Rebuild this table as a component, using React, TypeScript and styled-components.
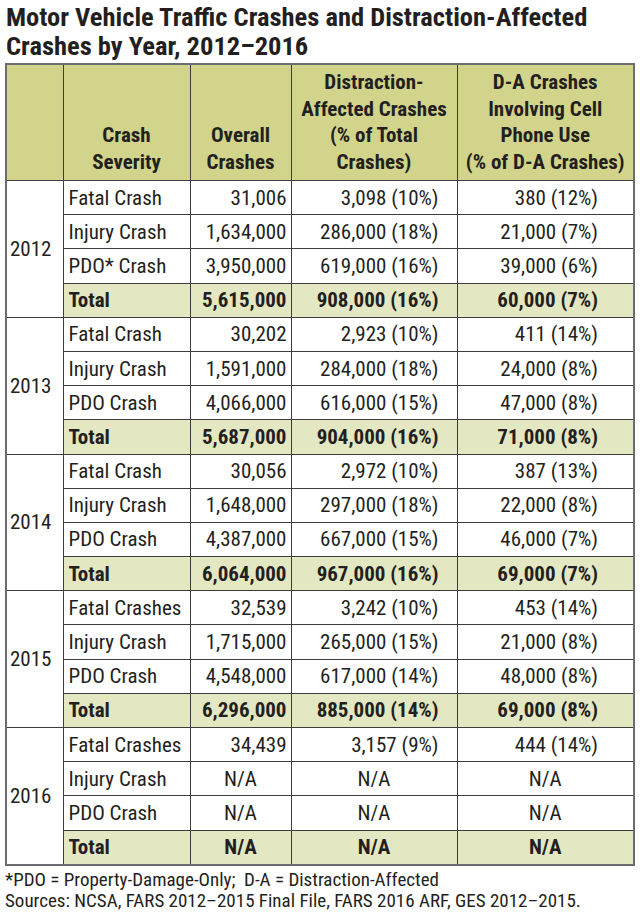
import React from "react"
import styled, { createGlobalStyle } from "styled-components"

const GlobalStyle = createGlobalStyle`
  html, body {
    margin: 0;
    padding: 0;
    background: #ffffff;
  }
  body {
    font-family: "Roboto Condensed", Roboto, "Liberation Sans", sans-serif;
    font-stretch: condensed;
    color: #231f20;
  }
`

const Page = styled.div`
  width: 640px;
  padding: 2px 0 0 5px;
  box-sizing: border-box;
`

const Title = styled.h1`
  margin: 0 0 3px 1px;
  font-size: 26.5px;
  line-height: 29px;
  font-weight: 700;
  color: #231f20;
`

const Table = styled.table`
  width: 628px;
  table-layout: fixed;
  border-collapse: collapse;
  border: 2px solid #6c6b72;
  font-size: 21px;
`

const HeadCell = styled.th`
  background: #d1d48a;
  border: 1.5px solid #3d3d3d;
  border-top: none;
  padding: 0 2px 5px;
  height: 110px;
  vertical-align: bottom;
  text-align: center;
  font-weight: 700;
  line-height: 26.5px;
`

const YearCell = styled.td`
  background: #ffffff;
  border: 1.5px solid #3d3d3d;
  text-align: left;
  padding: 0 0 0 3px;
  vertical-align: middle;
`

const Cell = styled.td<{ $align?: "left" | "right" | "center"; $pad?: number; $total?: boolean }>`
  height: 33.2px;
  padding: 0 ${({ $pad }) => ($pad ?? 4)}px 0 ${({ $align }) => ($align === "left" ? 5 : 4)}px;
  border: 1.5px solid #3d3d3d;
  text-align: ${({ $align }) => $align ?? "right"};
  background: ${({ $total }) => ($total ? "#e3e7c2" : "#ffffff")};
  font-weight: ${({ $total }) => ($total ? 700 : 400)};
  white-space: nowrap;
  line-height: 24px;
`

const Notes = styled.div`
  margin-top: 3px;
  font-size: 19px;
  line-height: 21px;
  color: #231f20;
`

type Row = [string, string, string, string]

interface YearGroup {
  year: string;
  rows: Row[];
}

const data: YearGroup[] = [
  {
    year: "2012",
    rows: [
      ["Fatal Crash", "31,006", "3,098 (10%)", "380 (12%)"],
      ["Injury Crash", "1,634,000", "286,000 (18%)", "21,000 (7%)"],
      ["PDO* Crash", "3,950,000", "619,000 (16%)", "39,000 (6%)"],
      ["Total", "5,615,000", "908,000 (16%)", "60,000 (7%)"],
    ],
  },
  {
    year: "2013",
    rows: [
      ["Fatal Crash", "30,202", "2,923 (10%)", "411 (14%)"],
      ["Injury Crash", "1,591,000", "284,000 (18%)", "24,000 (8%)"],
      ["PDO Crash", "4,066,000", "616,000 (15%)", "47,000 (8%)"],
      ["Total", "5,687,000", "904,000 (16%)", "71,000 (8%)"],
    ],
  },
  {
    year: "2014",
    rows: [
      ["Fatal Crash", "30,056", "2,972 (10%)", "387 (13%)"],
      ["Injury Crash", "1,648,000", "297,000 (18%)", "22,000 (8%)"],
      ["PDO Crash", "4,387,000", "667,000 (15%)", "46,000 (7%)"],
      ["Total", "6,064,000", "967,000 (16%)", "69,000 (7%)"],
    ],
  },
  {
    year: "2015",
    rows: [
      ["Fatal Crashes", "32,539", "3,242 (10%)", "453 (14%)"],
      ["Injury Crash", "1,715,000", "265,000 (15%)", "21,000 (8%)"],
      ["PDO Crash", "4,548,000", "617,000 (14%)", "48,000 (8%)"],
      ["Total", "6,296,000", "885,000 (14%)", "69,000 (8%)"],
    ],
  },
  {
    year: "2016",
    rows: [
      ["Fatal Crashes", "34,439", "3,157 (9%)", "444 (14%)"],
      ["Injury Crash", "N/A", "N/A", "N/A"],
      ["PDO Crash", "N/A", "N/A", "N/A"],
      ["Total", "N/A", "N/A", "N/A"],
    ],
  },
]

// right padding per numeric column (overall, distraction, cell phone)
const pads = [4, 18, 35]

const App = (): JSX.Element => (
  <Page>
    <GlobalStyle />
    <Title>
      Motor Vehicle Traffic Crashes and Distraction-Affected
      <br />
      Crashes by Year, 2012–2016
    </Title>
    <Table>
      <colgroup>
        <col style={{ width: 57 }} />
        <col style={{ width: 127 }} />
        <col style={{ width: 101 }} />
        <col style={{ width: 166 }} />
        <col style={{ width: 177 }} />
      </colgroup>
      <thead>
        <tr>
          <HeadCell />
          <HeadCell>Crash<br />Severity</HeadCell>
          <HeadCell>Overall<br />Crashes</HeadCell>
          <HeadCell>Distraction-<br />Affected Crashes<br />(% of Total<br />Crashes)</HeadCell>
          <HeadCell>D-A Crashes<br />Involving Cell<br />Phone Use<br />(% of D-A Crashes)</HeadCell>
        </tr>
      </thead>
      <tbody>
        {data.map((group) =>
          group.rows.map((row, i) => {
            const total = row[0] === "Total"
            return (
              <tr key={`${group.year}-${i}`}>
                {i === 0 && <YearCell rowSpan={4}>{group.year}</YearCell>}
                <Cell $align="left" $total={total}>{row[0]}</Cell>
                {row.slice(1).map((value, j) => (
                  <Cell
                    key={j}
                    $total={total}
                    $align={value === "N/A" ? "center" : "right"}
                    $pad={value === "N/A" ? 4 : pads[j]}
                  >
                    {value}
                  </Cell>
                ))}
              </tr>
            )
          })
        )}
      </tbody>
    </Table>
    <Notes>
      *PDO = Property-Damage-Only;&nbsp; D-A = Distraction-Affected
      <br />
      Sources: NCSA, FARS 2012–2015 Final File, FARS 2016 ARF, GES 2012–2015.
    </Notes>
  </Page>
)

export default App
